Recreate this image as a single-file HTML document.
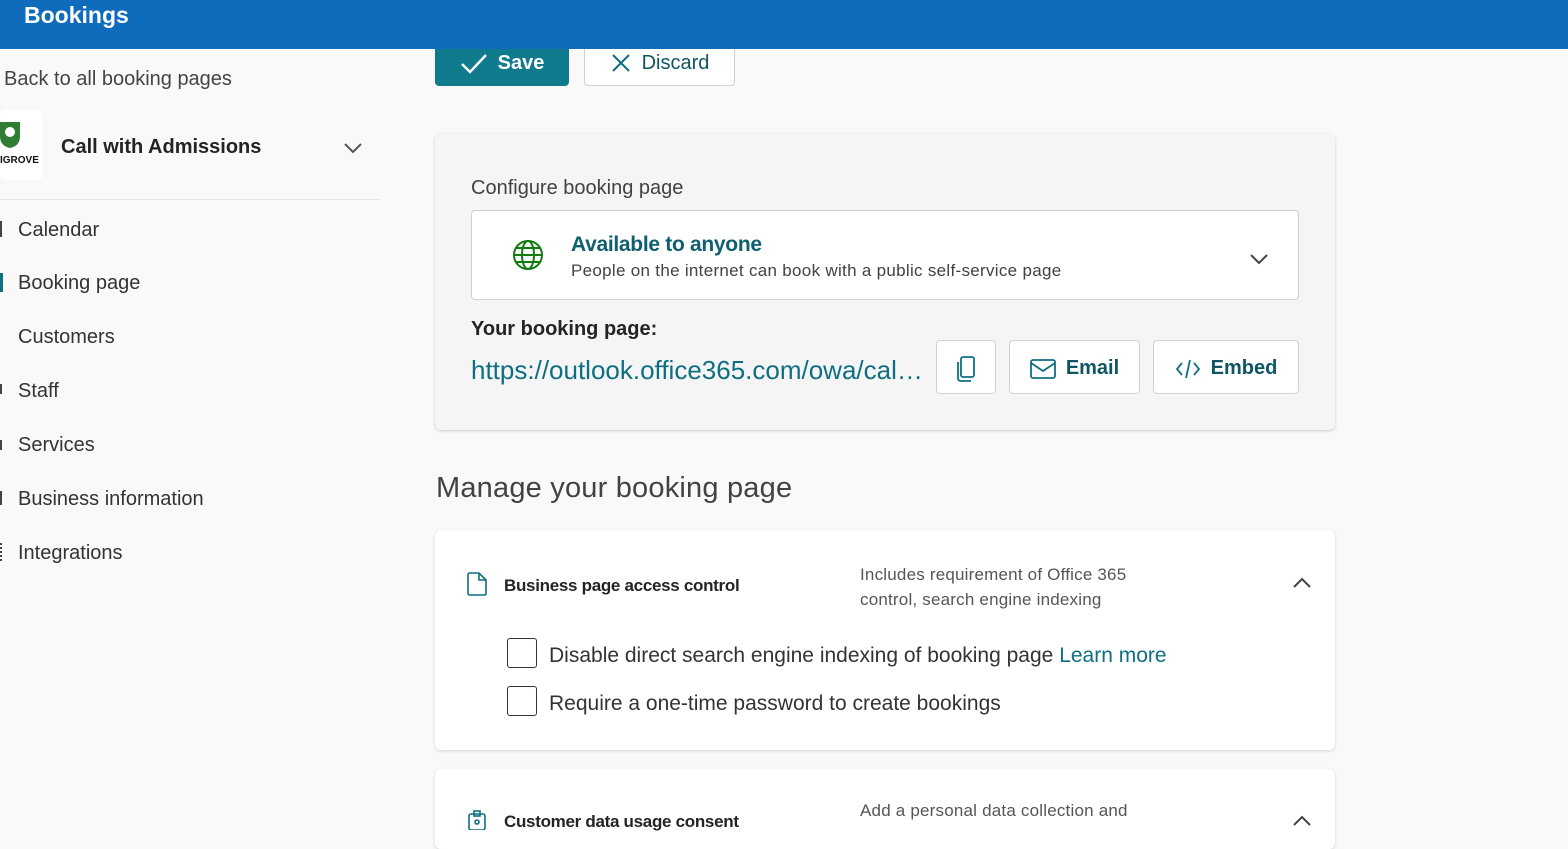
<!DOCTYPE html>
<html><head><meta charset="utf-8"><style>
*{box-sizing:border-box;margin:0;padding:0}
body{width:1568px;height:825px;overflow:hidden;background:#faf9f8;font-family:"Liberation Sans",sans-serif;color:#242424;position:relative}
.hdr{position:absolute;left:0;top:0;width:1568px;height:49px;background:#0f6cbd;color:#fff;font-size:23px;font-weight:bold;padding:2px 0 0 24px}
.a{position:absolute;white-space:nowrap}
.teal{color:#0f6f82}
.nav{font-size:20px;color:#333}
.card{position:absolute;background:#f5f5f5;border-radius:6px;box-shadow:0 1px 3px rgba(0,0,0,.18)}
.wcard{position:absolute;background:#fff;border-radius:6px;box-shadow:0 1px 3px rgba(0,0,0,.15)}
.btn{position:absolute;background:#fff;border:1px solid #d1d1d1;border-radius:4px;font-size:20px;font-weight:bold;color:#0f5563;display:flex;align-items:center;justify-content:center;gap:10px;padding-top:3px}
.cb{position:absolute;width:30px;height:30px;border:1.5px solid #333;border-radius:3px;background:#fff}
.ic{position:absolute;left:0;width:2px;height:16px;background:#444}
</style></head><body>
<div class="btn" style="left:435px;top:36px;width:134px;height:50px;background:#117b8e;border-color:#117b8e;color:#fff;padding-top:4px">
<svg width="28" height="22" viewBox="0 0 28 22"><path d="M2 12l8 8L26 3" fill="none" stroke="#fff" stroke-width="2.4"/></svg>Save</div>
<div class="btn" style="left:584px;top:36px;width:151px;height:50px;color:#0f5563;font-weight:normal;padding-top:4px">
<svg width="22" height="22" viewBox="0 0 22 22"><path d="M3 3l16 16M19 3L3 19" stroke="#0f6f82" stroke-width="2"/></svg>Discard</div>
<div class="hdr">Bookings</div>

<div class="a nav" style="left:4px;top:68px;color:#444">Back to all booking pages</div>
<div class="a" style="left:0;top:110px;width:43px;height:70px;background:#fff;border-radius:6px">
<svg width="43" height="70" viewBox="0 0 43 70"><path d="M0 12h20v14q0 10-10 12q-10-2-10-12z" fill="#2e7d32"/><circle cx="10" cy="22" r="5" fill="#fff"/></svg>
<div class="a" style="left:0;top:45px;font-size:10px;font-weight:bold;color:#111">IGROVE</div></div>
<div class="a" style="left:61px;top:136px;font-size:20px;font-weight:bold;color:#242424">Call with Admissions</div>
<svg class="a" style="left:343px;top:142px" width="20" height="12" viewBox="0 0 20 12"><path d="M2 2l8 8 8-8" fill="none" stroke="#555" stroke-width="2"/></svg>
<div class="a" style="left:0;top:199px;width:380px;height:1px;background:#e6e6e6"></div>
<div class="ic" style="top:221px"></div>
<div class="a nav" style="left:18px;top:219px">Calendar</div>
<div class="a" style="left:0;top:273px;width:3px;height:19px;background:#0f6f82"></div>
<div class="a nav teal" style="left:18px;top:272px">Booking page</div>
<div class="a nav" style="left:18px;top:326px">Customers</div>
<div class="ic" style="top:384px;height:10px"></div>
<div class="a nav" style="left:18px;top:380px">Staff</div>
<div class="ic" style="top:440px;height:10px"></div>
<div class="a nav" style="left:18px;top:434px">Services</div>
<div class="ic" style="top:491px;height:14px"></div>
<div class="a nav" style="left:18px;top:488px">Business information</div>
<div class="ic" style="top:543px;height:18px;width:3px;background:none;border-left:2px dotted #444"></div>
<div class="a nav" style="left:18px;top:542px">Integrations</div>

<div class="card" style="left:435px;top:134px;width:900px;height:296px"></div>
<div class="a" style="left:471px;top:177px;font-size:20px;color:#424242">Configure booking page</div>
<div class="a" style="left:471px;top:210px;width:828px;height:90px;background:#fff;border:1px solid #d1d1d1;border-radius:4px"></div>
<svg class="a" style="left:512px;top:239px" width="32" height="32" viewBox="0 0 32 32" fill="none" stroke="#107c10" stroke-width="2"><circle cx="16" cy="16" r="14"/><ellipse cx="16" cy="16" rx="6" ry="14"/><path d="M2 16h28M4 9h24M4 23h24"/></svg>
<div class="a" style="left:571px;top:233px;font-size:21px;font-weight:bold;color:#0f5f70;letter-spacing:-0.3px">Available to anyone</div>
<div class="a" style="left:571px;top:261px;font-size:17px;color:#424242;letter-spacing:0.3px">People on the internet can book with a public self-service page</div>
<svg class="a" style="left:1249px;top:253px" width="20" height="12" viewBox="0 0 20 12"><path d="M2 2l8 8 8-8" fill="none" stroke="#444" stroke-width="2"/></svg>
<div class="a" style="left:471px;top:318px;font-size:20px;font-weight:bold;color:#242424">Your booking page:</div>
<div class="a teal" style="left:471px;top:355px;font-size:26px;width:465px;overflow:hidden;text-overflow:ellipsis;color:#0f6f82">https://outlook.office365.com/owa/calendar/</div>
<div class="btn" style="left:936px;top:340px;width:60px;height:54px"><svg width="22" height="28" viewBox="0 0 22 28" fill="none" stroke="#0f6f82" stroke-width="1.8"><rect x="6" y="2" width="13" height="20" rx="2"/><path d="M3 7v16q0 3 3 3h10"/></svg></div>
<div class="btn" style="left:1009px;top:340px;width:131px;height:54px"><svg width="26" height="20" viewBox="0 0 26 20" fill="none" stroke="#0f6f82" stroke-width="1.8"><rect x="1" y="1" width="24" height="18" rx="2"/><path d="M1 4l12 8 12-8"/></svg>Email</div>
<div class="btn" style="left:1153px;top:340px;width:146px;height:54px"><svg width="26" height="22" viewBox="0 0 26 22" fill="none" stroke="#0f6f82" stroke-width="1.8"><path d="M7 5l-5 6 5 6M19 5l5 6-5 6M15 2l-4 18"/></svg>Embed</div>

<div class="a" style="left:436px;top:472px;font-size:29px;color:#424242;font-weight:bold;font-weight:500;letter-spacing:0.2px">Manage your booking page</div>

<div class="wcard" style="left:435px;top:530px;width:900px;height:220px"></div>
<svg class="a" style="left:466px;top:572px" width="22" height="24" viewBox="0 0 22 24" fill="none" stroke="#0f6f82" stroke-width="1.6"><path d="M2 3q0-2 2-2h9l7 7v13q0 2-2 2H4q-2 0-2-2z M13 1v7h7"/></svg>
<div class="a" style="left:504px;top:576px;font-size:17px;font-weight:bold;color:#242424;letter-spacing:-0.3px">Business page access control</div>
<div class="a" style="left:860px;top:562px;font-size:17px;color:#555;line-height:25px;letter-spacing:0.2px">Includes requirement of Office 365<br>control, search engine indexing</div>
<svg class="a" style="left:1292px;top:577px" width="20" height="12" viewBox="0 0 20 12"><path d="M2 10l8-8 8 8" fill="none" stroke="#444" stroke-width="2"/></svg>
<div class="cb" style="left:507px;top:638px"></div>
<div class="a" style="left:549px;top:644px;font-size:21px;color:#333">Disable direct search engine indexing of booking page <span class="teal">Learn more</span></div>
<div class="cb" style="left:507px;top:686px"></div>
<div class="a" style="left:549px;top:692px;font-size:21px;color:#333">Require a one-time password to create bookings</div>

<div class="wcard" style="left:435px;top:769px;width:900px;height:80px"></div>
<svg class="a" style="left:467px;top:810px" width="20" height="20" viewBox="0 0 20 20" fill="none" stroke="#0f6f82" stroke-width="1.6"><rect x="2" y="4" width="16" height="16" rx="2"/><rect x="7" y="1" width="6" height="5"/><circle cx="10" cy="12" r="2"/></svg>
<div class="a" style="left:504px;top:812px;font-size:17px;font-weight:bold;letter-spacing:-0.3px">Customer data usage consent</div>
<div class="a" style="left:860px;top:801px;font-size:17px;color:#555;letter-spacing:0.2px">Add a personal data collection and</div>
<svg class="a" style="left:1292px;top:815px" width="20" height="12" viewBox="0 0 20 12"><path d="M2 10l8-8 8 8" fill="none" stroke="#444" stroke-width="2"/></svg>
</body></html>
